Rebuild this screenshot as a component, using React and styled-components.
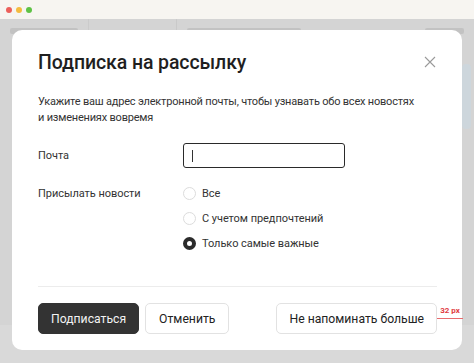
import React from "react";
import styled, { createGlobalStyle } from "styled-components";

const Global = createGlobalStyle`
  html, body { margin: 0; padding: 0; }
  body {
    background: #d3d3d3;
    font-family: Roboto, "Noto Sans", Arial, sans-serif;
    -webkit-font-smoothing: antialiased;
  }
`;

const Window = styled.div`
  width: 474px;
  height: 363px;
  display: flex;
  flex-direction: column;
  overflow: hidden;
`;

const TitleBar = styled.div`
  height: 19px;
  flex: none;
  background: #f7f5f1;
  display: flex;
  align-items: center;
  gap: 4px;
  padding-left: 6px;
`;

const Dot = styled.span`
  width: 6px;
  height: 6px;
  border-radius: 50%;
  background: ${(p) => p.$c};
`;

const Stage = styled.div`
  position: relative;
  flex: 1;
  background: #d4d4d4;
  padding: 11px 12px 13px 12px;
  display: flex;
`;

const Ghost = styled.div`
  position: absolute;
  background: ${(p) => p.$bg || "#c6c6c6"};
  border-radius: ${(p) => p.$r || "2px"};
`;

const Modal = styled.div`
  position: relative;
  flex: 1;
  background: #fff;
  border-radius: 10px;
  padding: 20px 25px 16px 26px;
  display: flex;
  flex-direction: column;
  color: #222;
`;

const Header = styled.div`
  display: flex;
  align-items: center;
  justify-content: space-between;
  height: 24px;
`;

const Title = styled.h1`
  margin: 0;
  font-size: 19.5px;
  font-weight: 500;
  letter-spacing: -0.1px;
  color: #1f1f1f;
`;

const Close = styled.button`
  border: 0;
  background: none;
  padding: 0;
  width: 14px;
  height: 14px;
  display: flex;
  cursor: pointer;
`;

const Desc = styled.p`
  margin: 20px 0 0;
  font-size: 11px;
  letter-spacing: -0.2px;
  line-height: 16px;
  color: #333;
`;

const DescLine = styled.span`
  display: block;
  white-space: nowrap;
`;

const FormRow = styled.div`
  display: grid;
  grid-template-columns: 145px 1fr;
  align-items: ${(p) => p.$align || "center"};
  margin-top: ${(p) => p.$mt || "0"};
`;

const Label = styled.span`
  font-size: 11px;
  letter-spacing: -0.05px;
  color: #333;
`;

const Input = styled.div`
  width: 162px;
  height: 25px;
  box-sizing: border-box;
  border: 1.5px solid #2a2a2a;
  border-radius: 3px;
  display: flex;
  align-items: center;
  padding-left: 8px;
`;

const Caret = styled.span`
  width: 1.3px;
  height: 12px;
  background: #333;
`;

const Radios = styled.div`
  display: flex;
  flex-direction: column;
  gap: 12px;
`;

const RadioRow = styled.label`
  display: flex;
  align-items: center;
  gap: 6px;
  font-size: 11px;
  letter-spacing: -0.05px;
  color: #333;
  height: 13px;
`;

const Circle = styled.span`
  width: 13px;
  height: 13px;
  box-sizing: border-box;
  border-radius: 50%;
  border: ${(p) => (p.$on ? "4px solid #2b2b2b" : "1px solid #dcdcdc")};
  background: #fff;
  flex: none;
`;

const Divider = styled.hr`
  border: 0;
  border-top: 1px solid #ececec;
  margin: auto 0 0;
  width: 100%;
`;

const Footer = styled.div`
  display: flex;
  align-items: center;
  gap: 6px;
  margin-top: 16px;
  position: relative;
`;

const Button = styled.button`
  height: 31px;
  box-sizing: border-box;
  padding: 0 ${(p) => p.$px || "12px"};
  border-radius: 5px;
  font-family: inherit;
  font-size: 12.2px;
  cursor: pointer;
  border: 1px solid ${(p) => (p.$primary ? "#333" : "#e2e2e2")};
  background: ${(p) => (p.$primary ? "#333333" : "#fff")};
  color: ${(p) => (p.$primary ? "#f2f2f2" : "#222")};
  margin-left: ${(p) => (p.$push ? "auto" : "0")};
`;

const Measure = styled.div`
  position: absolute;
  right: -26px;
  top: 50%;
  transform: translateY(-100%);
  width: 26px;
  display: flex;
  flex-direction: column;
  align-items: center;
`;

const MeasureText = styled.span`
  font-size: 8px;
  font-weight: 700;
  color: #e0393e;
  line-height: 9px;
`;

const MeasureLine = styled.span`
  width: 26px;
  height: 1px;
  background: #e86a6d;
  margin-top: 3px;
`;

export default function App() {
  return (
    <Window>
      <Global />
      <TitleBar>
        <Dot $c="#ec5f5a" />
        <Dot $c="#f4bb3f" />
        <Dot $c="#5ec245" />
      </TitleBar>
      <Stage>
        <Ghost style={{ left: 88, top: 0, width: 1, height: 12 }} $bg="#cbcbcb" />
        <Ghost style={{ left: 176, top: 0, width: 1, height: 12 }} $bg="#c9c9c9" />
        <Ghost style={{ left: 10, top: 9, width: 68, height: 6 }} $bg="#c2c2c2" />
        <Ghost style={{ left: 187, top: 9, width: 114, height: 6 }} $bg="#c2c2c2" />
        <Ghost style={{ left: 425, top: 9, width: 39, height: 6 }} $bg="#c2c2c2" />
        <Ghost style={{ left: 462, top: 45, width: 9, height: 65 }} $bg="#cdd6dc" $r="4px" />
        <Ghost style={{ left: 0, top: 306, width: 474, height: 38 }} $bg="#d9d9d9" $r="0" />
        <Modal>
          <Header>
            <Title>Подписка на рассылку</Title>
            <Close aria-label="Закрыть">
              <svg width="14" height="14" viewBox="0 0 14 14">
                <path d="M2 2L12 12M12 2L2 12" stroke="#9a9a9a" strokeWidth="1.1" />
              </svg>
            </Close>
          </Header>
          <Desc>
            <DescLine>Укажите ваш адрес электронной почты, чтобы узнавать обо всех новостях</DescLine>
            <DescLine>и изменениях вовремя</DescLine>
          </Desc>
          <FormRow $mt="17px">
            <Label>Почта</Label>
            <Input>
              <Caret />
            </Input>
          </FormRow>
          <FormRow $mt="19px" $align="start">
            <Label>Присылать новости</Label>
            <Radios>
              <RadioRow>
                <Circle />
                Все
              </RadioRow>
              <RadioRow>
                <Circle />
                С учетом предпочтений
              </RadioRow>
              <RadioRow>
                <Circle $on />
                Только самые важные
              </RadioRow>
            </Radios>
          </FormRow>
          <Divider />
          <Footer>
            <Button $primary>Подписаться</Button>
            <Button $px="13px">Отменить</Button>
            <Button $push $px="12px">Не напоминать больше</Button>
            <Measure>
              <MeasureText>32 px</MeasureText>
              <MeasureLine />
            </Measure>
          </Footer>
        </Modal>
      </Stage>
    </Window>
  );
}
